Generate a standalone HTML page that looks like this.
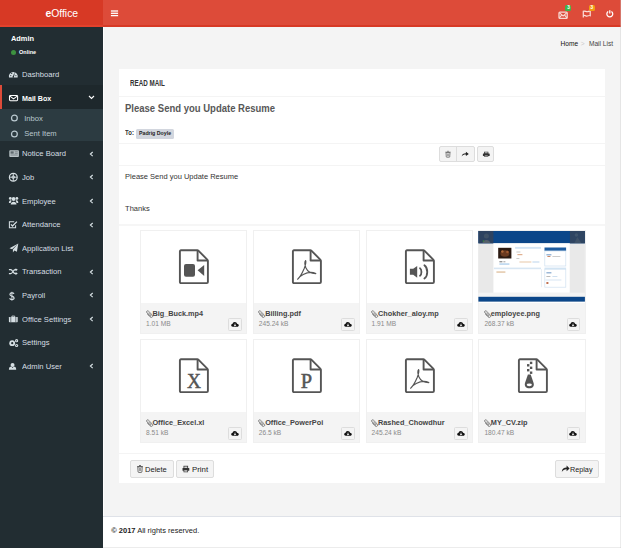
<!DOCTYPE html>
<html><head><meta charset="utf-8">
<style>
*{margin:0;padding:0;box-sizing:border-box}
html,body{width:621px;height:548px;overflow:hidden}
body{position:relative;background:#f4f4f4;font-family:"Liberation Sans",sans-serif;color:#333}
.a{position:absolute;white-space:nowrap}
svg.a{overflow:visible}
</style></head><body>
<div class="a" style="left:103px;top:27px;width:518px;height:489px;background:#f4f4f4"></div>
<div class="a" style="left:103px;top:27px;width:1px;height:489px;background:#fdfdfd"></div>
<div class="a" style="left:0px;top:0px;width:103px;height:25px;background:#d73925"></div>
<div class="a" style="left:0px;top:25px;width:103px;height:2px;background:#e3412c"></div>
<div class="a" style="left:103px;top:0px;width:518px;height:25px;background:#dd4b39"></div>
<div class="a" style="left:103px;top:25px;width:518px;height:2px;background:#d73925"></div>
<div class="a " style="left:45.40px;top:9.40px;font-size:10.4px;line-height:10.4px;font-weight:normal;color:#fff;"><b>e</b>Office</div>
<svg class="a" style="left:110px;top:9px;" width="9" height="9" viewBox="0 0 9 9"><rect x="0.9" y="1.35" width="7.2" height="1.3" fill="#fff"/><rect x="0.9" y="3.65" width="7.2" height="1.3" fill="#fff"/><rect x="0.9" y="5.95" width="7.2" height="1.3" fill="#fff"/></svg>
<svg class="a" style="left:558px;top:10.5px;" width="10" height="8" viewBox="0 0 10 8"><rect x="1" y="1.1" width="8.2" height="6.3" rx="1" fill="none" stroke="#f8d8d2" stroke-width="1.3"/><path d="M1.3 1.6 L5.1 4.9 L8.9 1.6 M1.3 6.8 L3.6 4.2 M8.9 6.8 L6.6 4.2" fill="none" stroke="#f8d8d2" stroke-width="1.2"/></svg>
<div class="a" style="left:565px;top:4.8px;width:6.2px;height:6.2px;background:#3db54a;border-radius:1.5px"></div>
<div class="a " style="left:567.20px;top:5.84px;font-size:4.8px;line-height:4.8px;font-weight:bold;color:#fff;">3</div>
<svg class="a" style="left:582px;top:10px;" width="10" height="8" viewBox="0 0 10 8"><path d="M1.3 0.8 V7.4" stroke="#fbe3de" stroke-width="1.2"/><path d="M1.6 1.3 C3 0.4 4.4 2.4 5.9 1.6 C6.8 1.1 7.6 1 8.2 1.3 V5.6 C6.8 5 5.4 6.8 3.9 5.9 C3 5.3 2.2 5.3 1.6 5.8" fill="none" stroke="#fbe3de" stroke-width="1.2"/></svg>
<div class="a" style="left:589px;top:4.9px;width:5.5px;height:6px;background:#f39c12;border-radius:1.5px"></div>
<div class="a " style="left:590.60px;top:5.84px;font-size:4.8px;line-height:4.8px;font-weight:bold;color:#fff;">3</div>
<svg class="a" style="left:604px;top:8px;" width="12" height="12" viewBox="0 0 12 12"><path d="M4.2 3.5 A2.95 2.95 0 1 0 7.4 3.5" fill="none" stroke="#fff" stroke-width="1.25"/><path d="M5.8 2.2 V5.6" stroke="#fff" stroke-width="1.25"/></svg>
<div class="a" style="left:0px;top:27px;width:103px;height:521px;background:#222d32"></div>
<div class="a " style="left:11.00px;top:35.20px;font-size:7.8px;line-height:7.8px;font-weight:bold;color:#fff;transform:scaleX(0.95);transform-origin:0 0">Admin</div>
<div class="a" style="left:11px;top:49.5px;width:5px;height:5px;background:#3d9140;border-radius:50%"></div>
<div class="a " style="left:19.00px;top:49.94px;font-size:5.5px;line-height:5.5px;font-weight:bold;color:#fff;">Online</div>
<div class="a" style="left:0px;top:85px;width:103px;height:23.7px;background:#1e282c"></div>
<div class="a" style="left:0px;top:85px;width:2px;height:23.7px;background:#dd4b39"></div>
<div class="a" style="left:0px;top:108.7px;width:103px;height:32.6px;background:#2c3b41"></div>
<div class="a " style="left:22.20px;top:70.64px;font-size:8.1px;line-height:8.1px;font-weight:normal;color:#d6dfe3;transform:scaleX(0.94);transform-origin:0 0">Dashboard</div>
<div class="a " style="left:22.20px;top:94.64px;font-size:8.1px;line-height:8.1px;font-weight:bold;color:#fff;transform:scaleX(0.88);transform-origin:0 0">Mail Box</div>
<svg class="a" style="left:88px;top:95.0px;" width="7" height="5" viewBox="0 0 7 5"><path d="M1 1 L3.5 3.5 L6 1" fill="none" stroke="#fff" stroke-width="1.1"/></svg>
<div class="a " style="left:22.20px;top:150.44px;font-size:8.1px;line-height:8.1px;font-weight:normal;color:#d6dfe3;transform:scaleX(0.94);transform-origin:0 0">Notice Board</div>
<svg class="a" style="left:89px;top:150.9px;" width="5" height="6" viewBox="0 0 5 6"><path d="M3.7 1 L1.4 3.1 L3.7 5.2" fill="none" stroke="#d6dfe3" stroke-width="1.15"/></svg>
<div class="a " style="left:22.20px;top:173.94px;font-size:8.1px;line-height:8.1px;font-weight:normal;color:#d6dfe3;transform:scaleX(0.94);transform-origin:0 0">Job</div>
<svg class="a" style="left:89px;top:174.4px;" width="5" height="6" viewBox="0 0 5 6"><path d="M3.7 1 L1.4 3.1 L3.7 5.2" fill="none" stroke="#d6dfe3" stroke-width="1.15"/></svg>
<div class="a " style="left:22.20px;top:197.54px;font-size:8.1px;line-height:8.1px;font-weight:normal;color:#d6dfe3;transform:scaleX(0.94);transform-origin:0 0">Employee</div>
<svg class="a" style="left:89px;top:198.0px;" width="5" height="6" viewBox="0 0 5 6"><path d="M3.7 1 L1.4 3.1 L3.7 5.2" fill="none" stroke="#d6dfe3" stroke-width="1.15"/></svg>
<div class="a " style="left:22.20px;top:221.14px;font-size:8.1px;line-height:8.1px;font-weight:normal;color:#d6dfe3;transform:scaleX(0.94);transform-origin:0 0">Attendance</div>
<svg class="a" style="left:89px;top:221.6px;" width="5" height="6" viewBox="0 0 5 6"><path d="M3.7 1 L1.4 3.1 L3.7 5.2" fill="none" stroke="#d6dfe3" stroke-width="1.15"/></svg>
<div class="a " style="left:22.20px;top:244.74px;font-size:8.1px;line-height:8.1px;font-weight:normal;color:#d6dfe3;transform:scaleX(0.94);transform-origin:0 0">Application List</div>
<div class="a " style="left:22.20px;top:268.34px;font-size:8.1px;line-height:8.1px;font-weight:normal;color:#d6dfe3;transform:scaleX(0.94);transform-origin:0 0">Transaction</div>
<svg class="a" style="left:89px;top:268.8px;" width="5" height="6" viewBox="0 0 5 6"><path d="M3.7 1 L1.4 3.1 L3.7 5.2" fill="none" stroke="#d6dfe3" stroke-width="1.15"/></svg>
<div class="a " style="left:22.20px;top:291.94px;font-size:8.1px;line-height:8.1px;font-weight:normal;color:#d6dfe3;transform:scaleX(0.94);transform-origin:0 0">Payroll</div>
<svg class="a" style="left:89px;top:292.40000000000003px;" width="5" height="6" viewBox="0 0 5 6"><path d="M3.7 1 L1.4 3.1 L3.7 5.2" fill="none" stroke="#d6dfe3" stroke-width="1.15"/></svg>
<div class="a " style="left:22.20px;top:315.54px;font-size:8.1px;line-height:8.1px;font-weight:normal;color:#d6dfe3;transform:scaleX(0.94);transform-origin:0 0">Office Settings</div>
<svg class="a" style="left:89px;top:316.0px;" width="5" height="6" viewBox="0 0 5 6"><path d="M3.7 1 L1.4 3.1 L3.7 5.2" fill="none" stroke="#d6dfe3" stroke-width="1.15"/></svg>
<div class="a " style="left:22.20px;top:339.14px;font-size:8.1px;line-height:8.1px;font-weight:normal;color:#d6dfe3;transform:scaleX(0.94);transform-origin:0 0">Settings</div>
<div class="a " style="left:22.20px;top:362.74px;font-size:8.1px;line-height:8.1px;font-weight:normal;color:#d6dfe3;transform:scaleX(0.94);transform-origin:0 0">Admin User</div>
<svg class="a" style="left:89px;top:363.20000000000005px;" width="5" height="6" viewBox="0 0 5 6"><path d="M3.7 1 L1.4 3.1 L3.7 5.2" fill="none" stroke="#d6dfe3" stroke-width="1.15"/></svg>
<svg class="a" style="left:0;top:0" width="103" height="548" viewBox="0 0 103 548"><path d="M9 77.6 A4.45 4.45 0 1 1 17.6 77.6 Z" fill="#d6dfe3"/><path d="M13.3 77.2 L14.2 74.2" stroke="#222d32" stroke-width="1"/><circle cx="13.3" cy="76.9" r="0.8" fill="#222d32"/><circle cx="10.8" cy="75.6" r="0.55" fill="#222d32"/><circle cx="11.7" cy="73.4" r="0.55" fill="#222d32"/><circle cx="14.6" cy="72.9" r="0.5" fill="#222d32"/><circle cx="15.9" cy="75.6" r="0.55" fill="#222d32"/><rect x="9.5" y="95.4" width="8.1" height="5.3" rx="0.9" fill="none" stroke="#fff" stroke-width="1.05"/><path d="M9.9 96.2 L13.55 98.9 L17.2 96.2" fill="none" stroke="#fff" stroke-width="1.05"/><rect x="9.3" y="150.2" width="9.6" height="6.8" rx="0.8" fill="#d6dfe3" opacity="0.85"/><rect x="10.5" y="151.3" width="3.2" height="2.4" fill="#222d32" opacity="0.6"/><path d="M14.6 151.8 H17.8 M14.6 153.3 H17.8 M10.5 155 H17.8" stroke="#222d32" stroke-width="0.7" opacity="0.6"/><circle cx="13.3" cy="177.2" r="3.9" fill="none" stroke="#d6dfe3" stroke-width="1.2"/><circle cx="13.3" cy="177.2" r="1.3" fill="none" stroke="#d6dfe3" stroke-width="0.9"/><path d="M13.3 173.5 V181 M9.6 177.2 H17" stroke="#d6dfe3" stroke-width="0.9"/><circle cx="13.6" cy="199" r="1.9" fill="#d6dfe3"/><path d="M10.7 204.6 C10.7 200.8 16.5 200.8 16.5 204.6 Z" fill="#d6dfe3"/><circle cx="10.3" cy="198.4" r="1.4" fill="#d6dfe3"/><circle cx="16.9" cy="198.4" r="1.4" fill="#d6dfe3"/><path d="M8.9 203 C8.9 200.4 10.4 199.9 11.6 200.6 L10.6 203 Z M18.3 203 C18.3 200.4 16.8 199.9 15.6 200.6 L16.6 203 Z" fill="#d6dfe3"/><path d="M15.6 225.3 V227.7 H9.4 V221.8 H14.2" fill="none" stroke="#d6dfe3" stroke-width="1.05"/><path d="M10.9 224.4 L12.5 226 L16.9 221.6" fill="none" stroke="#d6dfe3" stroke-width="1.3"/><path d="M18.3 243.4 L9.5 248.2 L12.1 249.2 Z M18.3 243.4 L12.9 249.5 L12.9 252.6 L14.4 250.5 L16.9 251.8 Z" fill="#d6dfe3"/><path d="M8.9 269.7 H10.8 C12.6 269.7 13.2 273.6 15.2 273.6 H16.2 M8.9 273.6 H10.8 C12.6 273.6 13.2 269.7 15.2 269.7 H16.2" fill="none" stroke="#d6dfe3" stroke-width="1.2"/><path d="M15.6 268.2 L17.8 269.7 L15.6 271.2 Z M15.6 272.1 L17.8 273.6 L15.6 275.1 Z" fill="#d6dfe3"/><path d="M14 293.9 C13.7 293.1 13 292.8 11.9 292.8 C10.6 292.8 9.9 293.5 9.9 294.4 C9.9 296.6 14.1 295.7 14.1 298.1 C14.1 299 13.2 299.6 11.9 299.6 C10.7 299.6 9.9 299.1 9.6 298.3" fill="none" stroke="#d6dfe3" stroke-width="1.15"/><path d="M11.9 291.8 V300.5" stroke="#d6dfe3" stroke-width="0.9"/><rect x="8.9" y="317" width="8.8" height="5.2" rx="0.6" fill="#d6dfe3"/><path d="M11.9 317 V316.1 H14.7 V317" fill="none" stroke="#d6dfe3" stroke-width="0.9"/><path d="M10.8 317 V322.2 M15.8 317 V322.2" stroke="#222d32" stroke-width="0.6"/><circle cx="12.2" cy="343.2" r="2.9" fill="#d6dfe3"/><circle cx="12.2" cy="343.2" r="1.1" fill="#222d32"/><circle cx="16.6" cy="340.7" r="1.6" fill="#d6dfe3"/><circle cx="16.6" cy="340.7" r="0.55" fill="#222d32"/><circle cx="16.6" cy="345.5" r="1.6" fill="#d6dfe3"/><circle cx="16.6" cy="345.5" r="0.55" fill="#222d32"/><circle cx="12.55" cy="364.9" r="2" fill="#d6dfe3"/><path d="M8.9 369.8 C8.9 366.6 10.5 366.6 11.5 366.8 L12.55 368 L13.6 366.8 C14.6 366.6 16.2 366.6 16.2 369.8 Z" fill="#d6dfe3"/></svg>
<div class="a " style="left:24.20px;top:114.57px;font-size:7.6px;line-height:7.6px;font-weight:normal;color:#b9c8cf;">Inbox</div>
<svg class="a" style="left:10px;top:114.4px;" width="8" height="8" viewBox="0 0 8 8"><circle cx="4.4" cy="4" r="2.9" fill="none" stroke="#b9c8cf" stroke-width="1.25"/></svg>
<div class="a " style="left:24.20px;top:130.37px;font-size:7.6px;line-height:7.6px;font-weight:normal;color:#b9c8cf;">Sent Item</div>
<svg class="a" style="left:10px;top:130.20000000000002px;" width="8" height="8" viewBox="0 0 8 8"><circle cx="4.4" cy="4" r="2.9" fill="none" stroke="#b9c8cf" stroke-width="1.25"/></svg>
<div class="a " style="left:560.50px;top:40.91px;font-size:6.6px;line-height:6.6px;font-weight:normal;color:#111;">Home</div>
<div class="a " style="left:580.80px;top:40.91px;font-size:6.6px;line-height:6.6px;font-weight:normal;color:#ccc;">&gt;</div>
<div class="a " style="left:588.90px;top:40.91px;font-size:6.6px;line-height:6.6px;font-weight:normal;color:#444;">Mail List</div>
<div class="a" style="left:119px;top:69px;width:486px;height:414px;background:#fff"></div>
<div class="a" style="left:119px;top:96px;width:486px;height:1px;background:#f4f4f4"></div>
<div class="a " style="left:130.10px;top:79.10px;font-size:8.5px;line-height:8.5px;font-weight:bold;color:#333;transform:scaleX(0.735);transform-origin:0 0">READ MAIL</div>
<div class="a " style="left:125.00px;top:104.23px;font-size:10px;line-height:10px;font-weight:bold;color:#585858;transform:scaleX(0.951);transform-origin:0 0">Please Send you Update Resume</div>
<div class="a " style="left:125.00px;top:129.15px;font-size:7.5px;line-height:7.5px;font-weight:bold;color:#333;transform:scaleX(0.8);transform-origin:0 0">To:</div>
<div class="a" style="left:136.2px;top:128.5px;width:37.7px;height:10.1px;background:#d2d6de;border-radius:1.5px"></div>
<div class="a " style="left:139.30px;top:130.69px;font-size:5.8px;line-height:5.8px;font-weight:bold;color:#222;transform:scaleX(0.905);transform-origin:0 0">Padrig Doyle</div>
<div class="a" style="left:119px;top:142.5px;width:486px;height:1px;background:#f4f4f4"></div>
<div class="a" style="left:439.3px;top:146.2px;width:35.4px;height:15.8px;background:#f4f4f4;border:1px solid #ddd;border-radius:2px"></div>
<div class="a" style="left:456.4px;top:146.2px;width:1px;height:15.8px;background:#ddd"></div>
<div class="a" style="left:477px;top:146.2px;width:17.4px;height:15.8px;background:#f4f4f4;border:1px solid #ddd;border-radius:2px"></div>
<svg class="a" style="left:444px;top:150px;" width="8" height="8" viewBox="0 0 8 8"><path d="M2 2.6 H6 L5.7 6.9 Q5.6 7.2 5.3 7.2 H2.7 Q2.4 7.2 2.3 6.9 Z" fill="none" stroke="#666" stroke-width="0.8"/><path d="M1.3 2.2 H6.7 M3.2 1.3 H4.8" stroke="#666" stroke-width="0.8"/><path d="M3.5 3.6 V6.2 M4.5 3.6 V6.2" stroke="#666" stroke-width="0.55"/></svg>
<svg class="a" style="left:461px;top:150px;" width="9" height="8" viewBox="0 0 9 8"><path d="M0.7 6.4 C0.9 4.2 2.6 3.2 4.9 3.2 V1.7 L7.8 3.9 L4.9 6.1 V4.6 C3 4.5 1.7 5.1 0.7 6.4 Z" fill="#222"/></svg>
<svg class="a" style="left:481.5px;top:150px;" width="9" height="8" viewBox="0 0 9 8"><rect x="2.6" y="2.1" width="3.4" height="1.6" fill="none" stroke="#333" stroke-width="0.7"/><rect x="0.9" y="3.6" width="6.8" height="2.4" rx="0.5" fill="#333"/><rect x="2.6" y="5.2" width="3.4" height="1.4" fill="#fff" stroke="#333" stroke-width="0.6"/></svg>
<div class="a" style="left:119px;top:164.5px;width:486px;height:1px;background:#f4f4f4"></div>
<div class="a " style="left:125.10px;top:172.85px;font-size:7.5px;line-height:7.5px;font-weight:normal;color:#333;">Please Send you Update Resume</div>
<div class="a " style="left:125.10px;top:205.05px;font-size:7.5px;line-height:7.5px;font-weight:normal;color:#333;">Thanks</div>
<div class="a" style="left:119px;top:224px;width:486px;height:2px;background:#f6f6f6"></div>
<div class="a" style="left:140px;top:230px;width:107.2px;height:103.7px;border:1px solid #f0f0f0;background:#fff"></div>
<div class="a" style="left:141px;top:302.8px;width:105.2px;height:29.9px;background:#f4f4f4"></div>
<svg class="a" style="left:179.2px;top:249.1px;" width="30" height="36" viewBox="0 0 30 36"><path d="M2.6 1.3 H18.4 Q19 1.3 19.6 1.9 L28.3 10.6 Q28.9 11.2 28.9 11.8 V33 Q28.9 34.1 27.8 34.1 H2 Q0.9 34.1 0.9 33 V2.4 Q0.9 1.3 2 1.3 Z" fill="none" stroke="#555" stroke-width="1.9" stroke-linejoin="round"/><path d="M18.6 1.6 V11.5 H28.6" fill="none" stroke="#555" stroke-width="1.9" stroke-linejoin="round"/><rect x="5" y="15" width="11" height="12.7" rx="2" fill="#555"/><path d="M18.6 21.3 L25.2 16 V26.9 Z" fill="#555"/></svg>
<svg class="a" style="left:145.5px;top:309.8px;" width="7" height="8" viewBox="0 0 7 8"><path d="M1.4 4.2 L4 6.8 C4.8 7.6 6 7.6 6.4 7 C6.9 6.4 6.8 5.5 6 4.7 L2.6 1.3 C2 0.7 1.2 0.7 0.8 1.2 C0.4 1.7 0.5 2.3 1 2.9 L4 5.9 C4.3 6.2 4.7 6.2 4.9 6 C5.1 5.8 5 5.4 4.7 5.1 L2.2 2.6" fill="none" stroke="#555" stroke-width="0.7"/></svg>
<div class="a " style="left:152.40px;top:310.12px;font-size:7.3px;line-height:7.3px;font-weight:bold;color:#444;">Big_Buck.mp4</div>
<div class="a " style="left:146.00px;top:320.71px;font-size:6.6px;line-height:6.6px;font-weight:normal;color:#8a8a8a;">1.01 MB</div>
<div class="a" style="left:228.4px;top:318.4px;width:13.5px;height:12.2px;background:#f4f4f4;border:1px solid #ddd;border-radius:1.5px"></div>
<svg class="a" style="left:231px;top:320.9px;" width="8" height="7" viewBox="0 0 8 7"><path d="M1.8 5.8 C0.6 5.8 0.2 5 0.2 4.3 C0.2 3.5 0.8 3 1.5 3 C1.6 1.8 2.6 1 3.8 1 C5 1 5.8 1.8 6 2.7 C7 2.7 7.8 3.5 7.8 4.3 C7.8 5.1 7.1 5.8 6.3 5.8 Z" fill="#111"/><path d="M4 2.6 V5 M2.9 4 L4 5.1 L5.1 4" fill="none" stroke="#f4f4f4" stroke-width="0.8"/></svg>
<div class="a" style="left:252.8px;top:230px;width:107.2px;height:103.7px;border:1px solid #f0f0f0;background:#fff"></div>
<div class="a" style="left:253.8px;top:302.8px;width:105.2px;height:29.9px;background:#f4f4f4"></div>
<svg class="a" style="left:292.0px;top:249.1px;" width="30" height="36" viewBox="0 0 30 36"><path d="M2.6 1.3 H18.4 Q19 1.3 19.6 1.9 L28.3 10.6 Q28.9 11.2 28.9 11.8 V33 Q28.9 34.1 27.8 34.1 H2 Q0.9 34.1 0.9 33 V2.4 Q0.9 1.3 2 1.3 Z" fill="none" stroke="#555" stroke-width="1.9" stroke-linejoin="round"/><path d="M18.6 1.6 V11.5 H28.6" fill="none" stroke="#555" stroke-width="1.9" stroke-linejoin="round"/><path d="M13.6 11.6 C12.4 13 12.9 16.2 14 19 C15.6 22.8 18.8 24.6 23.8 24.6 C20 22.6 15.2 23.4 11.2 25.4 C8.2 27 6.2 29 5.6 30.2 C7.6 28.6 10.2 24.2 12.1 19.8 C13.3 16.8 14.3 13 13.6 11.6 Z" fill="none" stroke="#555" stroke-width="1.15" stroke-linejoin="round"/></svg>
<svg class="a" style="left:258.3px;top:309.8px;" width="7" height="8" viewBox="0 0 7 8"><path d="M1.4 4.2 L4 6.8 C4.8 7.6 6 7.6 6.4 7 C6.9 6.4 6.8 5.5 6 4.7 L2.6 1.3 C2 0.7 1.2 0.7 0.8 1.2 C0.4 1.7 0.5 2.3 1 2.9 L4 5.9 C4.3 6.2 4.7 6.2 4.9 6 C5.1 5.8 5 5.4 4.7 5.1 L2.2 2.6" fill="none" stroke="#555" stroke-width="0.7"/></svg>
<div class="a " style="left:265.20px;top:310.12px;font-size:7.3px;line-height:7.3px;font-weight:bold;color:#444;">Billing.pdf</div>
<div class="a " style="left:258.80px;top:320.71px;font-size:6.6px;line-height:6.6px;font-weight:normal;color:#8a8a8a;">245.24 kB</div>
<div class="a" style="left:341.20000000000005px;top:318.4px;width:13.5px;height:12.2px;background:#f4f4f4;border:1px solid #ddd;border-radius:1.5px"></div>
<svg class="a" style="left:343.8px;top:320.9px;" width="8" height="7" viewBox="0 0 8 7"><path d="M1.8 5.8 C0.6 5.8 0.2 5 0.2 4.3 C0.2 3.5 0.8 3 1.5 3 C1.6 1.8 2.6 1 3.8 1 C5 1 5.8 1.8 6 2.7 C7 2.7 7.8 3.5 7.8 4.3 C7.8 5.1 7.1 5.8 6.3 5.8 Z" fill="#111"/><path d="M4 2.6 V5 M2.9 4 L4 5.1 L5.1 4" fill="none" stroke="#f4f4f4" stroke-width="0.8"/></svg>
<div class="a" style="left:365.6px;top:230px;width:107.2px;height:103.7px;border:1px solid #f0f0f0;background:#fff"></div>
<div class="a" style="left:366.6px;top:302.8px;width:105.2px;height:29.9px;background:#f4f4f4"></div>
<svg class="a" style="left:404.8px;top:249.1px;" width="30" height="36" viewBox="0 0 30 36"><path d="M2.6 1.3 H18.4 Q19 1.3 19.6 1.9 L28.3 10.6 Q28.9 11.2 28.9 11.8 V33 Q28.9 34.1 27.8 34.1 H2 Q0.9 34.1 0.9 33 V2.4 Q0.9 1.3 2 1.3 Z" fill="none" stroke="#555" stroke-width="1.9" stroke-linejoin="round"/><path d="M18.6 1.6 V11.5 H28.6" fill="none" stroke="#555" stroke-width="1.9" stroke-linejoin="round"/><path d="M4.9 19.8 H8.2 L12.2 16.9 V28.8 L8.2 25.8 H4.9 Z" fill="#555"/><path d="M15 19.3 C16.9 20.5 16.9 25.5 15 26.7" fill="none" stroke="#555" stroke-width="1.8" stroke-linecap="round"/><path d="M19.4 16.2 C23.2 19 23.2 27 19.4 29.6" fill="none" stroke="#555" stroke-width="1.8" stroke-linecap="round"/></svg>
<svg class="a" style="left:371.1px;top:309.8px;" width="7" height="8" viewBox="0 0 7 8"><path d="M1.4 4.2 L4 6.8 C4.8 7.6 6 7.6 6.4 7 C6.9 6.4 6.8 5.5 6 4.7 L2.6 1.3 C2 0.7 1.2 0.7 0.8 1.2 C0.4 1.7 0.5 2.3 1 2.9 L4 5.9 C4.3 6.2 4.7 6.2 4.9 6 C5.1 5.8 5 5.4 4.7 5.1 L2.2 2.6" fill="none" stroke="#555" stroke-width="0.7"/></svg>
<div class="a " style="left:378.00px;top:310.12px;font-size:7.3px;line-height:7.3px;font-weight:bold;color:#444;">Chokher_aloy.mp</div>
<div class="a " style="left:371.60px;top:320.71px;font-size:6.6px;line-height:6.6px;font-weight:normal;color:#8a8a8a;">1.91 MB</div>
<div class="a" style="left:454.0px;top:318.4px;width:13.5px;height:12.2px;background:#f4f4f4;border:1px solid #ddd;border-radius:1.5px"></div>
<svg class="a" style="left:456.6px;top:320.9px;" width="8" height="7" viewBox="0 0 8 7"><path d="M1.8 5.8 C0.6 5.8 0.2 5 0.2 4.3 C0.2 3.5 0.8 3 1.5 3 C1.6 1.8 2.6 1 3.8 1 C5 1 5.8 1.8 6 2.7 C7 2.7 7.8 3.5 7.8 4.3 C7.8 5.1 7.1 5.8 6.3 5.8 Z" fill="#111"/><path d="M4 2.6 V5 M2.9 4 L4 5.1 L5.1 4" fill="none" stroke="#f4f4f4" stroke-width="0.8"/></svg>
<div class="a" style="left:478.4px;top:230px;width:107.2px;height:103.7px;border:1px solid #f0f0f0;background:#fff"></div>
<div class="a" style="left:479.4px;top:302.8px;width:105.2px;height:29.9px;background:#f4f4f4"></div>
<svg class="a" style="left:0;top:0" width="621" height="548" viewBox="0 0 621 548"><g transform="translate(-0.60 0)"><rect x="479" y="231" width="106.50" height="70.60" fill="#e9e9e9" /><rect x="479" y="292.7" width="106.50" height="4.10" fill="#f3f3f3" /><rect x="479" y="231" width="106.50" height="12.30" fill="#0b4689" /><rect x="479" y="231" width="15.00" height="12.30" fill="#2d4260" /><circle cx="487" cy="236" r="2.5" fill="#3f5166"/><path d="M483 243 C484 239 490 239 491 243 Z" fill="#55606a"/><circle cx="484" cy="241" r="0.8" fill="#3a8a3a"/><rect x="570.5" y="231" width="15.00" height="12.30" fill="#2f4562" /><path d="M575 243 L578 237 L582 243 Z" fill="#3f5268"/><circle cx="577" cy="235" r="1.8" fill="#40556c"/><rect x="494" y="243.3" width="76.30" height="49.40" fill="#fff" /><rect x="498.8" y="247.8" width="13.20" height="10.70" fill="#2b1a12" /><ellipse cx="505.5" cy="253.5" rx="4.5" ry="3.2" fill="#6a3a20"/><circle cx="503" cy="251.5" r="1.2" fill="#b06a3a"/><circle cx="508" cy="252" r="1.2" fill="#a05a30"/><rect x="500" y="261" width="3.00" height="1.40" fill="#999" /><rect x="504" y="261" width="2.00" height="1.40" fill="#bbb" /><rect x="500" y="263.5" width="10.00" height="1.10" fill="#9cc3e8" /><rect x="515.7" y="246.9" width="25.90" height="1.90" fill="#d3e4f4" /><rect x="517" y="251.5" width="4.00" height="1.00" fill="#c8c8c8" /><rect x="518" y="254" width="5.00" height="1.20" fill="#e0b090" /><rect x="517" y="258" width="3.00" height="1.00" fill="#cccccc" /><rect x="520" y="261.5" width="12.00" height="1.00" fill="#e8c8a8" /><rect x="533" y="261.5" width="7.00" height="1.00" fill="#bcd4ec" /><rect x="494.5" y="267.6" width="47.10" height="1.60" fill="#d8e6f3" /><rect x="497" y="271.5" width="9.00" height="1.10" fill="#d9b48a" /><rect x="541.6" y="269.2" width="0.80" height="18.00" fill="#e3ebf3" /><rect x="545.1" y="247.5" width="21.60" height="3.40" fill="#1e5ca0" /><rect x="545.4" y="251" width="21" height="15" fill="none" stroke="#cfe0f0" stroke-width="0.7"/><rect x="547" y="254" width="5.00" height="1.50" fill="#9cb8d8" /><rect x="548" y="256" width="3.00" height="1.00" fill="#cc8866" /><rect x="553" y="256" width="8.00" height="1.00" fill="#ccc" /><rect x="545.1" y="267.6" width="21.60" height="1.60" fill="#d3e4f4" /><rect x="545.4" y="269.2" width="21" height="18" fill="none" stroke="#cfe0f0" stroke-width="0.7"/><rect x="547" y="272" width="5.00" height="1.50" fill="#9cb8d8" /><rect x="547" y="276" width="4.00" height="1.00" fill="#bbb" /><rect x="553" y="276" width="5.00" height="1.00" fill="#cfe0f0" /><rect x="546" y="279.5" width="16.00" height="1.00" fill="#d8e6f3" /><rect x="547" y="282" width="2.00" height="2.00" fill="#c07050" /><rect x="479" y="296.8" width="106.50" height="4.80" fill="#0b4689" /></g></svg>
<svg class="a" style="left:483.9px;top:309.8px;" width="7" height="8" viewBox="0 0 7 8"><path d="M1.4 4.2 L4 6.8 C4.8 7.6 6 7.6 6.4 7 C6.9 6.4 6.8 5.5 6 4.7 L2.6 1.3 C2 0.7 1.2 0.7 0.8 1.2 C0.4 1.7 0.5 2.3 1 2.9 L4 5.9 C4.3 6.2 4.7 6.2 4.9 6 C5.1 5.8 5 5.4 4.7 5.1 L2.2 2.6" fill="none" stroke="#555" stroke-width="0.7"/></svg>
<div class="a " style="left:490.80px;top:310.12px;font-size:7.3px;line-height:7.3px;font-weight:bold;color:#444;">employee.png</div>
<div class="a " style="left:484.40px;top:320.71px;font-size:6.6px;line-height:6.6px;font-weight:normal;color:#8a8a8a;">268.37 kB</div>
<div class="a" style="left:566.8px;top:318.4px;width:13.5px;height:12.2px;background:#f4f4f4;border:1px solid #ddd;border-radius:1.5px"></div>
<svg class="a" style="left:569.4px;top:320.9px;" width="8" height="7" viewBox="0 0 8 7"><path d="M1.8 5.8 C0.6 5.8 0.2 5 0.2 4.3 C0.2 3.5 0.8 3 1.5 3 C1.6 1.8 2.6 1 3.8 1 C5 1 5.8 1.8 6 2.7 C7 2.7 7.8 3.5 7.8 4.3 C7.8 5.1 7.1 5.8 6.3 5.8 Z" fill="#111"/><path d="M4 2.6 V5 M2.9 4 L4 5.1 L5.1 4" fill="none" stroke="#f4f4f4" stroke-width="0.8"/></svg>
<div class="a" style="left:140px;top:339px;width:107.2px;height:103.7px;border:1px solid #f0f0f0;background:#fff"></div>
<div class="a" style="left:141px;top:411.8px;width:105.2px;height:29.9px;background:#f4f4f4"></div>
<svg class="a" style="left:179.2px;top:358.1px;" width="30" height="36" viewBox="0 0 30 36"><path d="M2.6 1.3 H18.4 Q19 1.3 19.6 1.9 L28.3 10.6 Q28.9 11.2 28.9 11.8 V33 Q28.9 34.1 27.8 34.1 H2 Q0.9 34.1 0.9 33 V2.4 Q0.9 1.3 2 1.3 Z" fill="none" stroke="#555" stroke-width="1.9" stroke-linejoin="round"/><path d="M18.6 1.6 V11.5 H28.6" fill="none" stroke="#555" stroke-width="1.9" stroke-linejoin="round"/><text x="0" y="0" transform="translate(14.9 30.1) scale(0.9 1)" font-family="Liberation Serif" font-size="21.5" text-anchor="middle" fill="#555" stroke="#555" stroke-width="0.5">X</text></svg>
<svg class="a" style="left:145.5px;top:418.8px;" width="7" height="8" viewBox="0 0 7 8"><path d="M1.4 4.2 L4 6.8 C4.8 7.6 6 7.6 6.4 7 C6.9 6.4 6.8 5.5 6 4.7 L2.6 1.3 C2 0.7 1.2 0.7 0.8 1.2 C0.4 1.7 0.5 2.3 1 2.9 L4 5.9 C4.3 6.2 4.7 6.2 4.9 6 C5.1 5.8 5 5.4 4.7 5.1 L2.2 2.6" fill="none" stroke="#555" stroke-width="0.7"/></svg>
<div class="a " style="left:152.40px;top:419.12px;font-size:7.3px;line-height:7.3px;font-weight:bold;color:#444;">Office_Excel.xl</div>
<div class="a " style="left:146.00px;top:429.71px;font-size:6.6px;line-height:6.6px;font-weight:normal;color:#8a8a8a;">8.51 kB</div>
<div class="a" style="left:228.4px;top:427.4px;width:13.5px;height:12.2px;background:#f4f4f4;border:1px solid #ddd;border-radius:1.5px"></div>
<svg class="a" style="left:231px;top:429.9px;" width="8" height="7" viewBox="0 0 8 7"><path d="M1.8 5.8 C0.6 5.8 0.2 5 0.2 4.3 C0.2 3.5 0.8 3 1.5 3 C1.6 1.8 2.6 1 3.8 1 C5 1 5.8 1.8 6 2.7 C7 2.7 7.8 3.5 7.8 4.3 C7.8 5.1 7.1 5.8 6.3 5.8 Z" fill="#111"/><path d="M4 2.6 V5 M2.9 4 L4 5.1 L5.1 4" fill="none" stroke="#f4f4f4" stroke-width="0.8"/></svg>
<div class="a" style="left:252.8px;top:339px;width:107.2px;height:103.7px;border:1px solid #f0f0f0;background:#fff"></div>
<div class="a" style="left:253.8px;top:411.8px;width:105.2px;height:29.9px;background:#f4f4f4"></div>
<svg class="a" style="left:292.0px;top:358.1px;" width="30" height="36" viewBox="0 0 30 36"><path d="M2.6 1.3 H18.4 Q19 1.3 19.6 1.9 L28.3 10.6 Q28.9 11.2 28.9 11.8 V33 Q28.9 34.1 27.8 34.1 H2 Q0.9 34.1 0.9 33 V2.4 Q0.9 1.3 2 1.3 Z" fill="none" stroke="#555" stroke-width="1.9" stroke-linejoin="round"/><path d="M18.6 1.6 V11.5 H28.6" fill="none" stroke="#555" stroke-width="1.9" stroke-linejoin="round"/><text x="0" y="0" transform="translate(14.4 30.1) scale(0.95 1)" font-family="Liberation Serif" font-size="21.5" text-anchor="middle" fill="#555" stroke="#555" stroke-width="0.5">P</text></svg>
<svg class="a" style="left:258.3px;top:418.8px;" width="7" height="8" viewBox="0 0 7 8"><path d="M1.4 4.2 L4 6.8 C4.8 7.6 6 7.6 6.4 7 C6.9 6.4 6.8 5.5 6 4.7 L2.6 1.3 C2 0.7 1.2 0.7 0.8 1.2 C0.4 1.7 0.5 2.3 1 2.9 L4 5.9 C4.3 6.2 4.7 6.2 4.9 6 C5.1 5.8 5 5.4 4.7 5.1 L2.2 2.6" fill="none" stroke="#555" stroke-width="0.7"/></svg>
<div class="a " style="left:265.20px;top:419.12px;font-size:7.3px;line-height:7.3px;font-weight:bold;color:#444;">Office_PowerPoi</div>
<div class="a " style="left:258.80px;top:429.71px;font-size:6.6px;line-height:6.6px;font-weight:normal;color:#8a8a8a;">26.5 kB</div>
<div class="a" style="left:341.20000000000005px;top:427.4px;width:13.5px;height:12.2px;background:#f4f4f4;border:1px solid #ddd;border-radius:1.5px"></div>
<svg class="a" style="left:343.8px;top:429.9px;" width="8" height="7" viewBox="0 0 8 7"><path d="M1.8 5.8 C0.6 5.8 0.2 5 0.2 4.3 C0.2 3.5 0.8 3 1.5 3 C1.6 1.8 2.6 1 3.8 1 C5 1 5.8 1.8 6 2.7 C7 2.7 7.8 3.5 7.8 4.3 C7.8 5.1 7.1 5.8 6.3 5.8 Z" fill="#111"/><path d="M4 2.6 V5 M2.9 4 L4 5.1 L5.1 4" fill="none" stroke="#f4f4f4" stroke-width="0.8"/></svg>
<div class="a" style="left:365.6px;top:339px;width:107.2px;height:103.7px;border:1px solid #f0f0f0;background:#fff"></div>
<div class="a" style="left:366.6px;top:411.8px;width:105.2px;height:29.9px;background:#f4f4f4"></div>
<svg class="a" style="left:404.8px;top:358.1px;" width="30" height="36" viewBox="0 0 30 36"><path d="M2.6 1.3 H18.4 Q19 1.3 19.6 1.9 L28.3 10.6 Q28.9 11.2 28.9 11.8 V33 Q28.9 34.1 27.8 34.1 H2 Q0.9 34.1 0.9 33 V2.4 Q0.9 1.3 2 1.3 Z" fill="none" stroke="#555" stroke-width="1.9" stroke-linejoin="round"/><path d="M18.6 1.6 V11.5 H28.6" fill="none" stroke="#555" stroke-width="1.9" stroke-linejoin="round"/><path d="M13.6 11.6 C12.4 13 12.9 16.2 14 19 C15.6 22.8 18.8 24.6 23.8 24.6 C20 22.6 15.2 23.4 11.2 25.4 C8.2 27 6.2 29 5.6 30.2 C7.6 28.6 10.2 24.2 12.1 19.8 C13.3 16.8 14.3 13 13.6 11.6 Z" fill="none" stroke="#555" stroke-width="1.15" stroke-linejoin="round"/></svg>
<svg class="a" style="left:371.1px;top:418.8px;" width="7" height="8" viewBox="0 0 7 8"><path d="M1.4 4.2 L4 6.8 C4.8 7.6 6 7.6 6.4 7 C6.9 6.4 6.8 5.5 6 4.7 L2.6 1.3 C2 0.7 1.2 0.7 0.8 1.2 C0.4 1.7 0.5 2.3 1 2.9 L4 5.9 C4.3 6.2 4.7 6.2 4.9 6 C5.1 5.8 5 5.4 4.7 5.1 L2.2 2.6" fill="none" stroke="#555" stroke-width="0.7"/></svg>
<div class="a " style="left:378.00px;top:419.12px;font-size:7.3px;line-height:7.3px;font-weight:bold;color:#444;">Rashed_Chowdhur</div>
<div class="a " style="left:371.60px;top:429.71px;font-size:6.6px;line-height:6.6px;font-weight:normal;color:#8a8a8a;">245.24 kB</div>
<div class="a" style="left:454.0px;top:427.4px;width:13.5px;height:12.2px;background:#f4f4f4;border:1px solid #ddd;border-radius:1.5px"></div>
<svg class="a" style="left:456.6px;top:429.9px;" width="8" height="7" viewBox="0 0 8 7"><path d="M1.8 5.8 C0.6 5.8 0.2 5 0.2 4.3 C0.2 3.5 0.8 3 1.5 3 C1.6 1.8 2.6 1 3.8 1 C5 1 5.8 1.8 6 2.7 C7 2.7 7.8 3.5 7.8 4.3 C7.8 5.1 7.1 5.8 6.3 5.8 Z" fill="#111"/><path d="M4 2.6 V5 M2.9 4 L4 5.1 L5.1 4" fill="none" stroke="#f4f4f4" stroke-width="0.8"/></svg>
<div class="a" style="left:478.4px;top:339px;width:107.2px;height:103.7px;border:1px solid #f0f0f0;background:#fff"></div>
<div class="a" style="left:479.4px;top:411.8px;width:105.2px;height:29.9px;background:#f4f4f4"></div>
<svg class="a" style="left:517.6px;top:358.1px;" width="30" height="36" viewBox="0 0 30 36"><path d="M2.6 1.3 H18.4 Q19 1.3 19.6 1.9 L28.3 10.6 Q28.9 11.2 28.9 11.8 V33 Q28.9 34.1 27.8 34.1 H2 Q0.9 34.1 0.9 33 V2.4 Q0.9 1.3 2 1.3 Z" fill="none" stroke="#555" stroke-width="1.9" stroke-linejoin="round"/><path d="M18.6 1.6 V11.5 H28.6" fill="none" stroke="#555" stroke-width="1.9" stroke-linejoin="round"/><rect x="11.9" y="3.7" width="2.4" height="2.4" fill="#555"/><rect x="9.0" y="6.1" width="2.4" height="2.4" fill="#555"/><rect x="11.9" y="8.600000000000001" width="2.4" height="2.4" fill="#555"/><rect x="9.0" y="11.0" width="2.4" height="2.4" fill="#555"/><rect x="11.9" y="13.5" width="2.4" height="2.4" fill="#555"/><path d="M9.9 16.4 H12.7 L15.6 25 C16.6 28.3 14.4 30.3 11.3 30.3 C8.2 30.3 6.1 28.3 7 25 Z" fill="#555"/><ellipse cx="11.3" cy="26.8" rx="2.6" ry="1.4" fill="#fff"/></svg>
<svg class="a" style="left:483.9px;top:418.8px;" width="7" height="8" viewBox="0 0 7 8"><path d="M1.4 4.2 L4 6.8 C4.8 7.6 6 7.6 6.4 7 C6.9 6.4 6.8 5.5 6 4.7 L2.6 1.3 C2 0.7 1.2 0.7 0.8 1.2 C0.4 1.7 0.5 2.3 1 2.9 L4 5.9 C4.3 6.2 4.7 6.2 4.9 6 C5.1 5.8 5 5.4 4.7 5.1 L2.2 2.6" fill="none" stroke="#555" stroke-width="0.7"/></svg>
<div class="a " style="left:490.80px;top:419.12px;font-size:7.3px;line-height:7.3px;font-weight:bold;color:#444;">MY_CV.zip</div>
<div class="a " style="left:484.40px;top:429.71px;font-size:6.6px;line-height:6.6px;font-weight:normal;color:#8a8a8a;">180.47 kB</div>
<div class="a" style="left:566.8px;top:427.4px;width:13.5px;height:12.2px;background:#f4f4f4;border:1px solid #ddd;border-radius:1.5px"></div>
<svg class="a" style="left:569.4px;top:429.9px;" width="8" height="7" viewBox="0 0 8 7"><path d="M1.8 5.8 C0.6 5.8 0.2 5 0.2 4.3 C0.2 3.5 0.8 3 1.5 3 C1.6 1.8 2.6 1 3.8 1 C5 1 5.8 1.8 6 2.7 C7 2.7 7.8 3.5 7.8 4.3 C7.8 5.1 7.1 5.8 6.3 5.8 Z" fill="#111"/><path d="M4 2.6 V5 M2.9 4 L4 5.1 L5.1 4" fill="none" stroke="#f4f4f4" stroke-width="0.8"/></svg>
<div class="a" style="left:119px;top:453.3px;width:486px;height:1px;background:#f4f4f4"></div>
<div class="a" style="left:130.3px;top:459.6px;width:43.5px;height:18px;background:#f4f4f4;border:1px solid #ddd;border-radius:2px"></div>
<svg class="a" style="left:136px;top:464px;" width="8" height="9" viewBox="0 0 8 9"><path d="M1.8 2.9 H6.2 L5.9 7.9 Q5.8 8.4 5.3 8.4 H2.7 Q2.2 8.4 2.1 7.9 Z" fill="none" stroke="#555" stroke-width="0.85"/><path d="M1.1 2.5 H6.9 M3 1.5 H5" stroke="#555" stroke-width="0.85"/><path d="M3.5 4 V7 M4.5 4 V7" stroke="#555" stroke-width="0.55"/></svg>
<div class="a " style="left:144.80px;top:465.63px;font-size:8px;line-height:8px;font-weight:normal;color:#222;transform:scaleX(0.943);transform-origin:0 0">Delete</div>
<div class="a" style="left:176.1px;top:459.6px;width:38.2px;height:18px;background:#f4f4f4;border:1px solid #ddd;border-radius:2px"></div>
<svg class="a" style="left:182px;top:464px;" width="9" height="9" viewBox="0 0 9 9"><rect x="1.9" y="2.2" width="3.8" height="2" fill="none" stroke="#333" stroke-width="0.8"/><rect x="0.5" y="4" width="6.8" height="2.8" rx="0.6" fill="#333"/><rect x="1.9" y="6" width="3.8" height="1.9" fill="#f4f4f4" stroke="#333" stroke-width="0.7"/></svg>
<div class="a " style="left:191.50px;top:465.63px;font-size:8px;line-height:8px;font-weight:normal;color:#222;transform:scaleX(0.98);transform-origin:0 0">Print</div>
<div class="a" style="left:555.2px;top:459.9px;width:44px;height:17.8px;background:#f4f4f4;border:1px solid #ddd;border-radius:2px"></div>
<svg class="a" style="left:560.5px;top:463.5px;" width="9" height="9" viewBox="0 0 9 9"><path d="M0.8 8 C1 4.8 3 3.6 5.6 3.6 V1.6 L8.6 4.4 L5.6 7.2 V5.3 C3.6 5.2 2 6 0.8 8 Z" fill="#222"/></svg>
<div class="a " style="left:570.10px;top:465.63px;font-size:8px;line-height:8px;font-weight:normal;color:#222;transform:scaleX(0.904);transform-origin:0 0">Replay</div>
<div class="a" style="left:103px;top:516px;width:518px;height:32px;background:#fff;border-top:1px solid #dfe2e8"></div>
<div class="a " style="left:111.20px;top:526.65px;font-size:7.5px;line-height:7.5px;font-weight:normal;color:#222;"><b>&copy; 2017</b> All rights reserved.</div>
<div class="a" style="left:103px;top:547px;width:518px;height:1px;background:#ececec"></div>
<div class="a" style="left:619.5px;top:0px;width:1px;height:548px;background:rgba(200,200,200,0.35)"></div>
</body></html>
